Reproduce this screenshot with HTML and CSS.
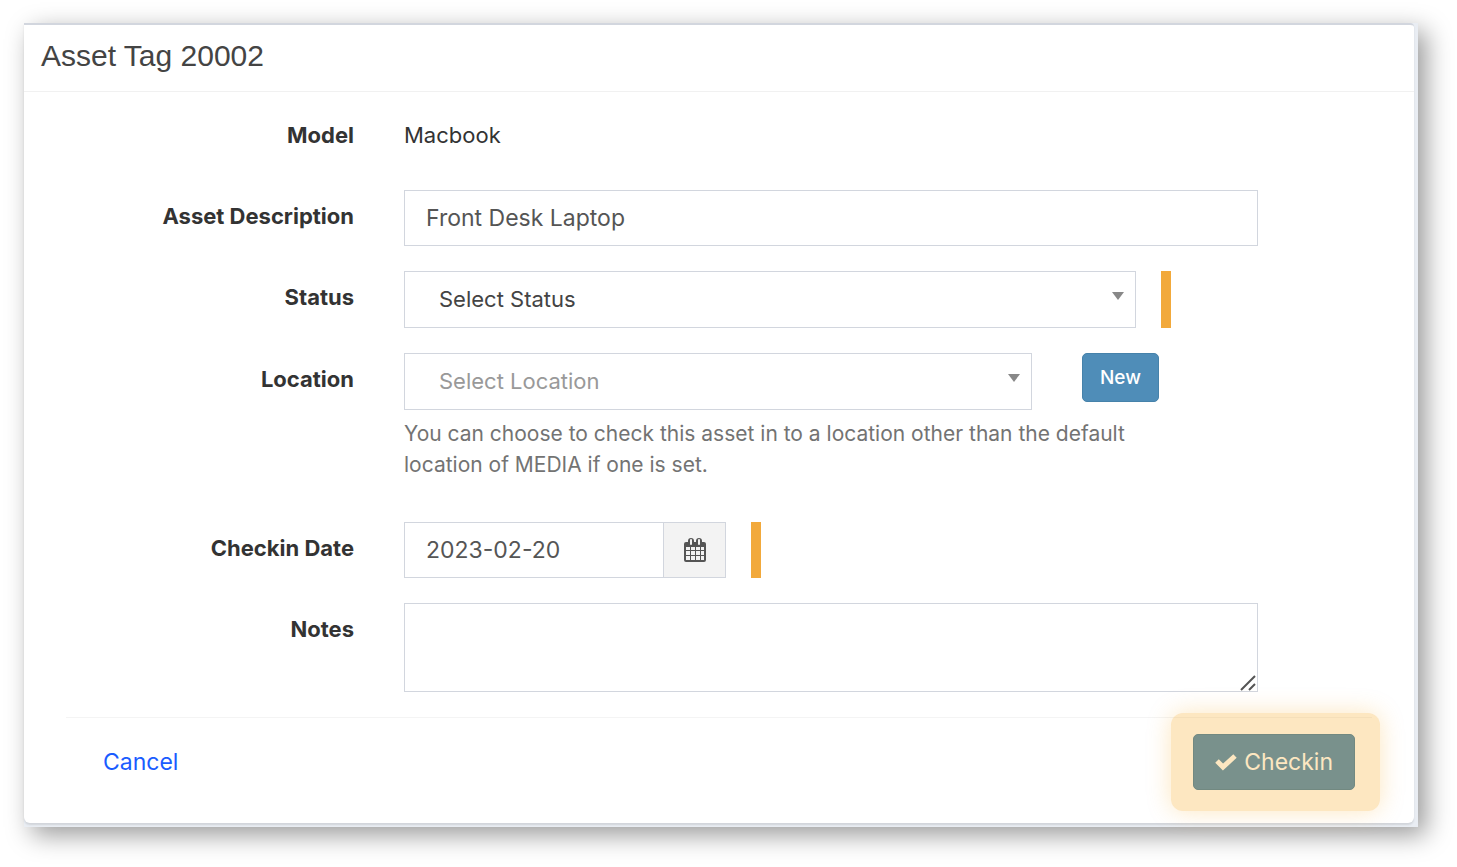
FILE: index.html
```html
<!DOCTYPE html>
<html lang="en">
<head>
  <meta charset="UTF-8">
  <meta name="viewport" content="width=device-width, initial-scale=1.0">
  <title>Asset Checkin</title>
  <link rel="stylesheet" href="styles.css">
</head>
<body>
  <main class="wrapper">
    <form class="box">
      <header class="box-header">
        <h2 class="box-title">Asset Tag 20002</h2>
      </header>

      <div class="box-body">
        <div class="form-group model-group">
          <span class="form-label">Model</span>
          <p class="static">Macbook</p>
        </div>

        <div class="form-group">
          <label class="form-label" for="name">Asset Description</label>
          <input class="form-control" type="text" id="name" value="Front Desk Laptop">
        </div>

        <div class="form-group">
          <label class="form-label" for="status">Status</label>
          <div class="field-row">
            <div class="select-wrap select-status">
              <select class="form-control" id="status">
                <option>Select Status</option>
              </select>
              <svg class="caret" viewBox="0 0 12 8"><path d="M0 0h12L6 8z"/></svg>
            </div>
            <span class="required"></span>
          </div>
        </div>

        <div class="form-group">
          <label class="form-label" for="location">Location</label>
          <div>
            <div class="field-row">
              <div class="select-wrap select-location">
                <select class="form-control placeholder" id="location">
                  <option>Select Location</option>
                </select>
                <svg class="caret" viewBox="0 0 12 8"><path d="M0 0h12L6 8z"/></svg>
              </div>
              <button class="btn btn-new" type="button">New</button>
            </div>
            <p class="help-block">You can choose to check this asset in to a location other than the default location of MEDIA if one is set.</p>
          </div>
        </div>

        <div class="form-group">
          <label class="form-label" for="checkin_at">Checkin Date</label>
          <div class="field-row">
            <div class="input-group">
              <input class="form-control" type="text" id="checkin_at" value="2023-02-20">
              <span class="addon">
                <svg class="calendar" viewBox="0 0 22 24">
                  <path fill-rule="evenodd" d="M2 4h2V3a3 3 0 0 1 6 0v1h2V3a3 3 0 0 1 6 0v1h2a2 2 0 0 1 2 2v16a2 2 0 0 1-2 2H2a2 2 0 0 1-2-2V6a2 2 0 0 1 2-2zM6 2v4a1 1 0 0 0 2 0V2a1 1 0 0 0-2 0zM14 2v4a1 1 0 0 0 2 0V2a1 1 0 0 0-2 0zM2 9v3h4V9zM7 9v3h4V9zM12 9v3h4V9zM17 9v3h3V9zM2 13v4h4v-4zM7 13v4h4v-4zM12 13v4h4v-4zM17 13v4h3v-4zM2 18v4h4v-4zM7 18v4h4v-4zM12 18v4h4v-4zM17 18v4h3v-4z"/>
                </svg>
              </span>
            </div>
            <span class="required"></span>
          </div>
        </div>

        <div class="form-group">
          <label class="form-label" for="note">Notes</label>
          <div class="textarea-wrap">
            <textarea class="form-control" id="note"></textarea>
            <svg class="grip" viewBox="0 0 16 16"><path d="M1 15L15 1M9 15l6-6"/></svg>
          </div>
        </div>
      </div>

      <footer class="box-footer">
        <a class="cancel" href="#">Cancel</a>
        <div class="highlight">
          <button class="btn btn-checkin" type="submit">
            <svg class="check" viewBox="0 0 22 18"><path d="M2 8l6 6L20 3"/></svg>
            Checkin
          </button>
        </div>
      </footer>
    </form>
  </main>
</body>
</html>
```

FILE: styles.css
```css
* {
  box-sizing: border-box;
}
body {
  margin: 0;
  padding: 23px 39px 40px 24px;
  background-color: #fff;
  color: #333;
  font-family: Inter, "Liberation Sans", sans-serif;
  font-size: 22px;
  line-height: 31px;
}
.wrapper {
  padding: 0 4px 4px 0;
  background-color: #e9edf3;
  box-shadow: 8px 8px 24px rgba(0, 0, 0, 0.4);
}
.box {
  background-color: #fff;
  border-top: 2px solid #d2d6de;
  border-radius: 0 4px 6px 6px;
  box-shadow: 0 2px 2px rgba(0, 0, 0, 0.1);
}
.box-header {
  padding: 13px 17px 18px;
  border-bottom: 1px solid #f1f1f1;
}
.box-title {
  margin: 0;
  font-family: "Liberation Sans", Arial, sans-serif;
  font-size: 30px;
  font-weight: normal;
  line-height: 35px;
  color: #444;
}
.box-body {
  display: flex;
  flex-direction: column;
  gap: 25px;
  padding: 28px 156px 25px 0;
}
.form-group {
  display: grid;
  grid-template-columns: 330px minmax(0, 1fr);
  column-gap: 50px;
  align-items: start;
}
.form-label {
  padding-top: 11px;
  font-weight: bold;
  text-align: right;
}
.model-group {
  padding-bottom: 14px;
}
.model-group .form-label {
  padding-top: 0;
}
.static {
  margin: 0;
}
.form-control {
  display: block;
  width: 100%;
  height: 56px;
  margin: 0;
  padding: 0 21px;
  border: 1px solid #d2d6de;
  border-radius: 0;
  background-color: #fff;
  color: #555;
  font: inherit;
  font-size: 23px;
}
select.form-control {
  appearance: none;
  height: 57px;
  padding: 0 34px;
  color: #444;
  font-size: 22px;
}
select.placeholder {
  color: #999;
}
textarea.form-control {
  height: 89px;
  resize: none;
}
.field-row {
  display: flex;
  align-items: flex-start;
}
.select-wrap,
.textarea-wrap {
  position: relative;
}
.select-status {
  width: calc(100% - 122px);
}
.select-location {
  width: calc(100% - 226px);
}
.caret {
  position: absolute;
  top: 21px;
  right: 12px;
  width: 12px;
  height: 8px;
  fill: #888;
  pointer-events: none;
}
.grip {
  position: absolute;
  right: 2px;
  bottom: 1px;
  width: 16px;
  height: 16px;
  fill: none;
  stroke: #555;
  stroke-width: 2;
  pointer-events: none;
}
.required {
  align-self: stretch;
  width: 10px;
  margin-left: 25px;
  background-color: #f2a93b;
}
.btn {
  border: 1px solid #367fa9;
  border-radius: 5px;
  background-color: #4f8db8;
  color: #fff;
  font: inherit;
  cursor: pointer;
}
.btn-new {
  height: 49px;
  margin-left: 50px;
  padding: 0 17px;
  border-color: #4682aa;
  font-size: 19px;
  font-weight: 500;
}
.help-block {
  margin: 8px 0 17px;
  padding-right: 60px;
  color: #737373;
  font-size: 21px;
}
.input-group {
  display: flex;
  width: 322px;
}
.addon {
  display: flex;
  flex: 0 0 62px;
  align-items: center;
  justify-content: center;
  border: 1px solid #d2d6de;
  border-left: 0;
  background-color: #f3f3f3;
}
.calendar {
  width: 22px;
  height: 24px;
  fill: #555;
}
.box-footer {
  display: flex;
  align-items: center;
  justify-content: space-between;
  margin: 0 42px;
  padding: 16px 17px 33px 37px;
  border-top: 1px solid #f4f4f4;
  font-size: 23px;
}
.cancel {
  color: #1a5cff;
  text-decoration: none;
}
.highlight {
  position: relative;
}
/* glow laid over the submit button */
.highlight::after {
  content: "";
  position: absolute;
  inset: -21px -25px -21px -22px;
  border-radius: 12px;
  background-color: rgba(247, 159, 7, 0.25);
  box-shadow: 0 0 24px rgba(247, 159, 7, 0.25);
  pointer-events: none;
}
.btn-checkin {
  display: flex;
  align-items: center;
  gap: 7px;
  height: 56px;
  padding: 0 21px;
  border-color: #4682aa;
}
.check {
  width: 22px;
  height: 18px;
  fill: none;
  stroke: #fff;
  stroke-width: 5;
}
```
